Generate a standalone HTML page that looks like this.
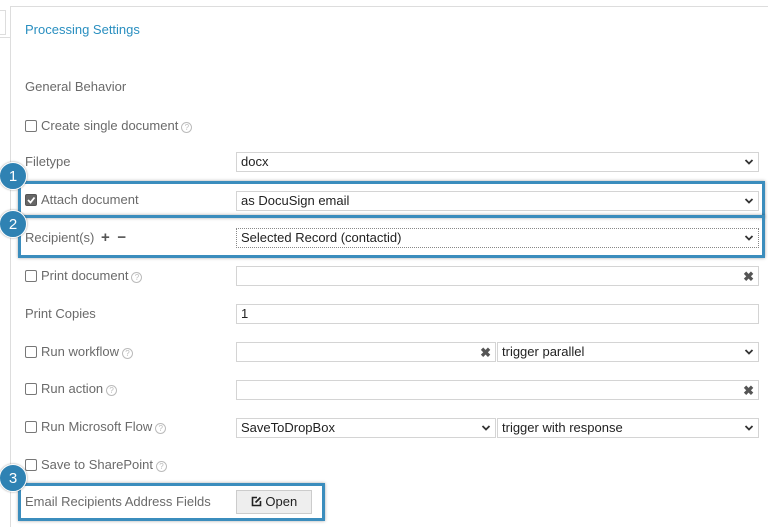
<!DOCTYPE html>
<html><head><meta charset="utf-8"><style>
*{box-sizing:border-box;margin:0;padding:0}
body{width:768px;height:527px;background:#fff;position:relative;overflow:hidden;font-family:"Liberation Sans",Arial,sans-serif}
.a{position:absolute}
.lbl{position:absolute;left:25px;font-size:13px;color:#6a6a6a;line-height:16px}
.cb{display:inline-block;width:12px;height:12px;border:1px solid #777;border-radius:2px;vertical-align:-2px;margin-right:4px;background:#fff}
.cb.on{background:#666;border-color:#555;position:relative}
.q{display:inline-block;width:11px;height:11px;border:1px solid #bbb;border-radius:50%;font-size:8px;color:#bbb;text-align:center;line-height:9px;vertical-align:0;margin-left:3px}
.in{position:absolute;height:20px;border:1px solid #d4d4d4;background:#fff;font-size:13px;color:#222;padding-left:4px;line-height:18px}
.chev{position:absolute;right:4px;top:4px;width:10px;height:10px}
.x{position:absolute;right:4px;top:1px;font-size:13px;color:#555;font-weight:bold}
.box{position:absolute;border:3px solid #3b8dbd;box-shadow:0 0 3px rgba(0,0,0,.35)}
.num{position:absolute;width:28px;height:28px;border-radius:50%;background:#2f82b3;color:#fff;font-size:15px;text-align:center;line-height:27px;border:1px solid #fff;box-shadow:0 0 2px rgba(0,0,0,.4)}
</style></head><body>
<div class="a" style="left:10px;top:6px;width:758px;height:1px;background:#ddd"></div>
<div class="a" style="left:10px;top:6px;width:1px;height:521px;background:#ddd"></div>
<div class="a" style="left:-2px;top:10px;width:8px;height:25px;border:1px solid #ddd"></div>
<div class="a" style="left:0;top:37px;width:10px;height:1px;background:#ddd"></div>
<div class="a" style="left:25px;top:22px;font-size:13px;color:#2a8fc0">Processing Settings</div>
<div class="lbl" style="top:79px">General Behavior</div>
<div class="lbl" style="top:118px"><span class="cb"></span>Create single document<span class="q">?</span></div>
<div class="lbl" style="top:154px">Filetype</div>
<div class="box" style="left:18px;top:181px;width:747px;height:37px"></div>
<div class="box" style="left:18px;top:215px;width:747px;height:43px"></div>
<div class="lbl" style="top:192px"><span class="cb on"><svg width="10" height="10" style="position:absolute;left:0;top:0"><path d="M2 5 L4.5 7.5 L8.5 2.5" stroke="#fff" stroke-width="1.8" fill="none"/></svg></span>Attach document</div>
<div class="lbl" style="top:230px">Recipient(s) <b style="color:#555;font-size:15px;margin-left:3px">+</b> <b style="color:#555;font-size:15px;margin-left:4px">−</b></div>
<div class="lbl" style="top:268px"><span class="cb"></span>Print document<span class="q">?</span></div>
<div class="lbl" style="top:306px">Print Copies</div>
<div class="lbl" style="top:344px"><span class="cb"></span>Run workflow<span class="q">?</span></div>
<div class="lbl" style="top:381px"><span class="cb"></span>Run action<span class="q">?</span></div>
<div class="lbl" style="top:419px"><span class="cb"></span>Run Microsoft Flow<span class="q">?</span></div>
<div class="lbl" style="top:457px"><span class="cb"></span>Save to SharePoint<span class="q">?</span></div>
<div class="box" style="left:18px;top:483px;width:307px;height:38px"></div>
<div class="lbl" style="top:494px">Email Recipients Address Fields</div>
<div class="a" style="left:236px;top:490px;width:76px;height:24px;background:#eee;border:1px solid #ccc;font-size:13px;color:#222;line-height:22px;text-align:center">
<svg width="11" height="11" style="vertical-align:-1px" viewBox="0 0 11 11"><path d="M6 1.5H1.5V9.5H9.5V5" stroke="#222" stroke-width="1.6" fill="none"/><path d="M4.5 6.5L9.5 1.5" stroke="#222" stroke-width="1.8"/></svg> Open</div>

<svg width="0" height="0" style="position:absolute"><defs><symbol id="cv" viewBox="0 0 10 10"><path d="M1.5 3L5 6.5L8.5 3" stroke="#333" stroke-width="1.8" fill="none"/></symbol></defs></svg>
<div class="in" style="left:236px;top:152px;width:523px">docx<svg class="chev"><use href="#cv"/></svg></div>
<div class="in" style="left:236px;top:191px;width:523px">as DocuSign email<svg class="chev"><use href="#cv"/></svg></div>
<div class="in" style="left:236px;top:228px;width:523px;border:1px dotted #888">Selected Record (contactid)<svg class="chev"><use href="#cv"/></svg></div>
<div class="in" style="left:236px;top:266px;width:523px"><span class="x">✖</span></div>
<div class="in" style="left:236px;top:304px;width:523px">1</div>
<div class="in" style="left:236px;top:342px;width:260px"><span class="x">✖</span></div>
<div class="in" style="left:497px;top:342px;width:262px">trigger parallel<svg class="chev"><use href="#cv"/></svg></div>
<div class="in" style="left:236px;top:380px;width:523px"><span class="x">✖</span></div>
<div class="in" style="left:236px;top:418px;width:260px">SaveToDropBox<svg class="chev"><use href="#cv"/></svg></div>
<div class="in" style="left:497px;top:418px;width:262px">trigger with response<svg class="chev"><use href="#cv"/></svg></div>

<div class="num" style="left:-1px;top:162px">1</div>
<div class="num" style="left:-1px;top:210px">2</div>
<div class="num" style="left:-1px;top:464px">3</div>
</body></html>
